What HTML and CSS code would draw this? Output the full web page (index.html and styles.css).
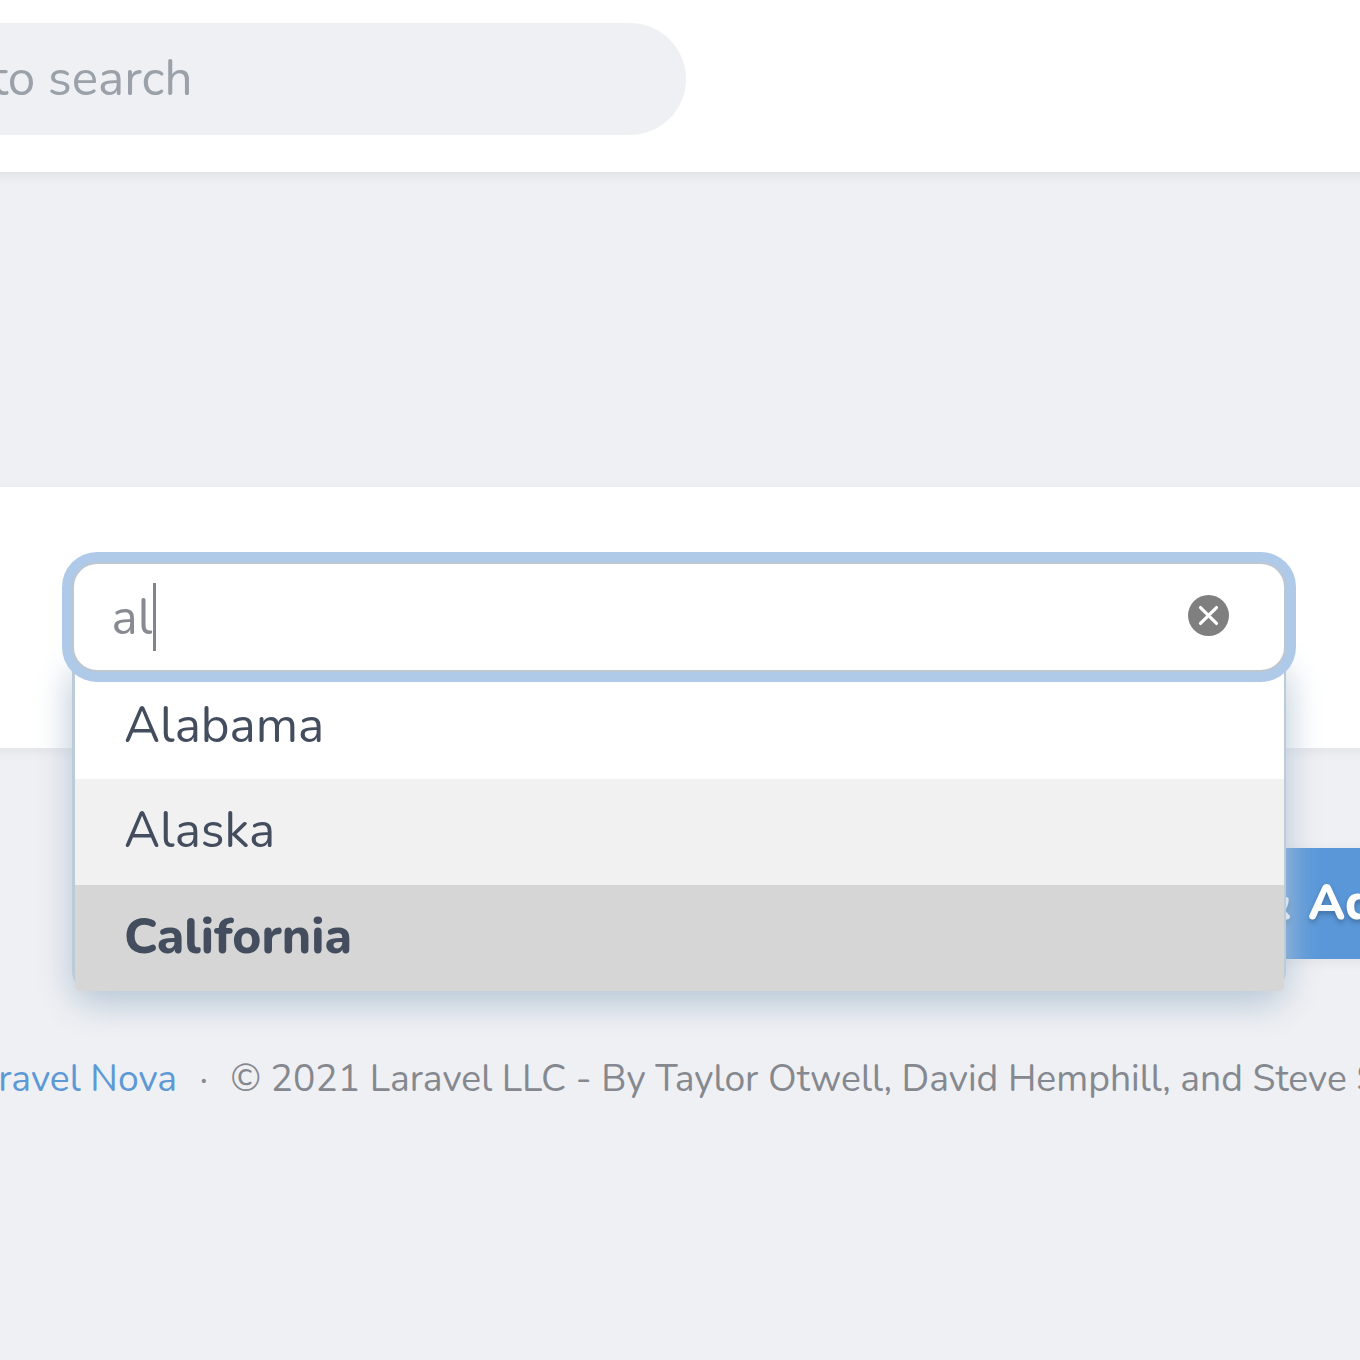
FILE: index.html
```html
<!DOCTYPE html>
<html lang="en">
<head>
<meta charset="utf-8">
<title>Nova</title>
<link rel="stylesheet" href="styles.css">
</head>
<body>
<header class="topbar">
  <div class="search"><span class="search-text">Press / to search</span></div>
</header>
<main>
  <section class="card">
    <div class="combo">
      <div class="field">
        <span class="value">al</span><span class="caret"></span>
        <svg class="clear" viewBox="0 0 40 40" role="img" aria-label="Clear">
          <circle cx="20" cy="20" r="20" fill="#7f7f7f"/>
          <path d="M12.2 12.2 27.8 27.8M27.8 12.2 12.2 27.8" stroke="#fff" stroke-width="3.1" stroke-linecap="round"/>
        </svg>
      </div>
      <ul class="menu">
        <li class="option">Alabama</li>
        <li class="option hover">Alaska</li>
        <li class="option selected">California</li>
      </ul>
    </div>
  </section>
  <div class="actions">
    <button class="button"><span class="amp">Create &amp;</span><span>Add Another</span></button>
  </div>
  <footer class="footer">
    <a class="link">Laravel Nova</a>
    <span class="dot">·</span>
    <span class="credits">© 2021 Laravel LLC - By Taylor Otwell, David Hemphill, and Steve Schoger.</span>
  </footer>
</main>
</body>
</html>
```
FILE: styles.css
```css
* { box-sizing: border-box; }
body {
  margin: 0;
  height: 1360px;
  overflow: hidden;
  background: #eff0f4;
  color: #434d5e;
  font-family: Nunito, Lato, sans-serif;
  font-size: 49.4px;
  line-height: 60px;
  white-space: nowrap;
}
.topbar {
  height: 172px;
  margin: 0 -20px;
  padding: 23px 20px 0;
  background: #fff;
  box-shadow: 0 3px 12px rgba(0, 0, 0, .07);
}
.search {
  display: flex;
  align-items: center;
  width: 686px;
  height: 112px;
  border-radius: 0 56px 56px 0;
  background: #eff0f4;
  color: #9ba1a9;
}
.search-text {
  display: flex;
  justify-content: flex-end;
  width: 192.5px;
}
main { padding-top: 315px; }
.card {
  height: 261px;
  margin: 0 -20px;
  padding: 75px 94px 0 92px;
  background: #fff;
  box-shadow: 0 3px 12px rgba(0, 0, 0, .06);
}
.combo { position: relative; z-index: 2; }
.field {
  position: relative;
  z-index: 2;
  display: flex;
  align-items: center;
  height: 110px;
  padding: 0 54px 0 37.5px;
  border: 2px solid #bdc7d2;
  border-radius: 25px;
  background: #fff;
  box-shadow: 0 0 0 10px #afc9e9;
  color: #878b91;
}
.value { width: 41px; padding-top: 2px; }
.caret { width: 3px; height: 68px; background: #7e858d; }
.clear { width: 41px; height: 41px; margin: -3px 1px 0 auto; }
.menu {
  position: absolute;
  top: 98px;
  left: 0;
  right: 0;
  margin: 0;
  padding: 13.5px 0 0;
  list-style: none;
  background: #fff;
  border: solid #bdcad8;
  border-width: 0 2px 0 3px;
  border-radius: 0 0 20px 20px;
  box-shadow: 0 12px 36px rgb(180, 197, 212);
}
.option { height: 105.8px; padding: 22px 49px 0; }
.hover { background: #f1f1f1; }
.selected { background: #d6d6d6; border-radius: 0 0 5px 5px; font-weight: 800; }
.actions { display: flex; padding: 100px 0 0 1070px; }
.button {
  display: flex;
  flex-shrink: 0;
  gap: 16px;
  height: 111px;
  padding: 25px 40px 0 33px;
  border: 0;
  background: #5997d9;
  color: #fff;
  font: inherit;
  font-weight: 800;
  text-shadow: 0 3px 5px rgba(0, 0, 0, .25);
  box-shadow: 0 3px 12px rgba(0, 0, 0, .06);
}
.amp { display: flex; justify-content: flex-end; width: 189px; }
.footer {
  display: flex;
  padding-top: 90px;
  font-size: 37.3px;
  color: #85898f;
}
.link {
  display: flex;
  flex: none;
  justify-content: flex-end;
  width: 177px;
  color: #5d99d5;
}
.dot { flex: none; width: 53.5px; text-align: center; }
.credits { flex: none; }
```
